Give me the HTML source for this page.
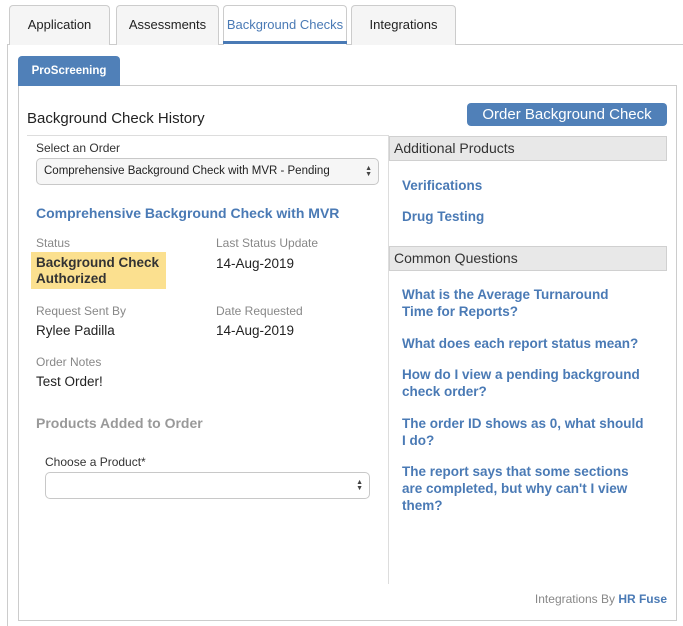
<!DOCTYPE html>
<html><head><meta charset="utf-8"><style>
*{box-sizing:border-box;margin:0;padding:0}
body{width:683px;height:626px;background:#fff;font-family:"Liberation Sans",sans-serif;color:#222;position:relative;overflow:hidden}
.a{position:absolute;white-space:nowrap}
.tab{position:absolute;top:5px;height:40px;border:1px solid #ccc;border-bottom:none;border-radius:4px 4px 0 0;background:#f5f5f5;font-size:13px;text-align:center;line-height:38px;color:#222}
.blue{color:#4a7ab5}
.lnk{color:#4a7ab5;font-weight:bold;font-size:13.5px;position:absolute;left:402px;line-height:17px}
.lab{font-size:12px;color:#888}
.sel{position:absolute;border:1px solid #c8c8c8;border-radius:5px;background:#f6f6f6}
.arr{position:absolute;right:6px;top:50%;transform:translateY(-50%);font-size:7px;line-height:6px;color:#444}
.hd{position:absolute;left:389px;width:278px;height:25px;background:#e8e8e8;border:1px solid #d0d0d0;font-size:14px;line-height:23px;padding-left:4px;color:#333}
</style></head><body>
<div class="a" style="left:7px;top:44px;width:676px;height:1px;background:#ccc"></div>
<div class="a" style="left:7px;top:44px;width:1px;height:582px;background:#ccc"></div>
<div class="tab" style="left:9px;width:101px">Application</div>
<div class="tab" style="left:116px;width:103px">Assessments</div>
<div class="tab" style="left:223px;width:124px;background:#fff;color:#4a7ab5;height:40px">Background Checks</div>
<div class="a" style="left:223px;top:41px;width:124px;height:3px;background:#4a7ab5"></div>
<div class="tab" style="left:351px;width:105px">Integrations</div>

<div class="a" style="left:18px;top:85px;width:659px;height:536px;border:1px solid #ccc"></div>
<div class="a" style="left:18px;top:56px;width:102px;height:30px;background:#5080b8;border-radius:4px 4px 0 0;color:#fff;font-weight:bold;font-size:11.5px;text-align:center;line-height:30px">ProScreening</div>

<div class="a" style="left:27px;top:110px;font-size:15px;color:#222">Background Check History</div>
<div class="a" style="left:467px;top:103px;width:200px;height:23px;background:#5080b8;border-radius:4px;color:#fff;font-size:15px;text-align:center;line-height:23px">Order Background Check</div>
<div class="a" style="left:27px;top:135px;width:362px;height:1px;background:#ddd"></div>
<div class="a" style="left:388px;top:136px;width:1px;height:448px;background:#ddd"></div>

<div class="a" style="left:36px;top:141px;font-size:12px;color:#333">Select an Order</div>
<div class="sel" style="left:36px;top:158px;width:343px;height:27px"><span class="a" style="left:7px;top:6px;font-size:11.5px;color:#222">Comprehensive Background Check with MVR - Pending</span><span class="arr">▲<br>▼</span></div>
<div class="a blue" style="left:36px;top:205px;font-size:14px;font-weight:bold">Comprehensive Background Check with MVR</div>
<div class="a lab" style="left:36px;top:236px">Status</div>
<div class="a lab" style="left:216px;top:236px">Last Status Update</div>
<div class="a" style="left:31px;top:252px;width:135px;height:37px;background:#fbe08f"></div>
<div class="a" style="left:36px;top:255px;font-size:13.5px;font-weight:bold;line-height:16px;color:#333">Background Check<br>Authorized</div>
<div class="a" style="left:216px;top:256px;font-size:13.5px">14-Aug-2019</div>
<div class="a lab" style="left:36px;top:304px">Request Sent By</div>
<div class="a lab" style="left:216px;top:304px">Date Requested</div>
<div class="a" style="left:36px;top:323px;font-size:13.5px">Rylee Padilla</div>
<div class="a" style="left:216px;top:323px;font-size:13.5px">14-Aug-2019</div>
<div class="a lab" style="left:36px;top:355px">Order Notes</div>
<div class="a" style="left:36px;top:374px;font-size:13.5px">Test Order!</div>
<div class="a" style="left:36px;top:415px;font-size:14px;font-weight:bold;color:#999">Products Added to Order</div>
<div class="a" style="left:45px;top:455px;font-size:12px;color:#333">Choose a Product*</div>
<div class="sel" style="left:45px;top:472px;width:325px;height:27px;background:#fff"><span class="arr">▲<br>▼</span></div>

<div class="hd" style="top:136px">Additional Products</div>
<div class="lnk" style="top:177px">Verifications</div>
<div class="lnk" style="top:208px">Drug Testing</div>
<div class="hd" style="top:246px">Common Questions</div>
<div class="lnk" style="top:286px">What is the Average Turnaround<br>Time for Reports?</div>
<div class="lnk" style="top:335px">What does each report status mean?</div>
<div class="lnk" style="top:366px">How do I view a pending background<br>check order?</div>
<div class="lnk" style="top:415px">The order ID shows as 0, what should<br>I do?</div>
<div class="lnk" style="top:463px">The report says that some sections<br>are completed, but why can't I view<br>them?</div>

<div class="a" style="right:16px;top:592px;font-size:12px;color:#888">Integrations By <b class="blue">HR Fuse</b></div>
</body></html>
